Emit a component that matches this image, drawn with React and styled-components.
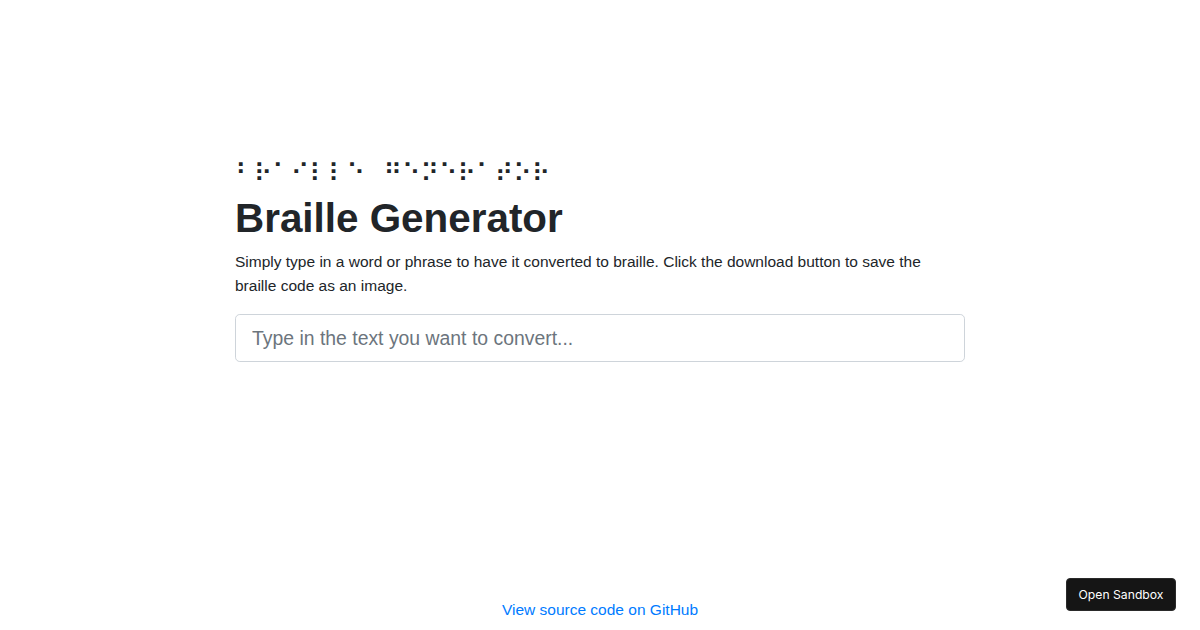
import React from "react";
import styled, { createGlobalStyle } from "styled-components";

const Global = createGlobalStyle`
  html, body { margin: 0; padding: 0; background: #fff; }
  body {
    font-family: "Liberation Sans", Helvetica, Arial, sans-serif;
    color: #212529;
    font-size: 16px;
    line-height: 1.5;
  }
  * { box-sizing: border-box; }
`;

const Page = styled.div`
  min-height: 630px;
  display: flex;
  flex-direction: column;
`;

const Main = styled.main`
  flex: 1;
  padding-top: 156px;
`;

const Container = styled.div`
  width: 730px;
  margin: 0 auto;
`;

const BrailleLine = styled.div`
  font-family: "DejaVu Sans", sans-serif;
  font-size: 25.3px;
  line-height: 36px;
  height: 38px;
  color: #212529;
  white-space: pre;
`;

const Title = styled.h1`
  margin: 0 0 8px;
  font-size: 40.4px;
  font-weight: 700;
  line-height: 48px;
`;

const Lead = styled.p`
  margin: 0 0 16px;
  font-size: 15.5px;
  line-height: 24px;
  width: 700px;
`;

const Input = styled.input`
  display: block;
  width: 100%;
  height: 48px;
  padding: 8px 16px;
  font-family: inherit;
  font-size: 19.4px;
  color: #495057;
  border: 1px solid #ced4da;
  border-radius: 4.8px;
  outline: none;
  &::placeholder { color: #6c757d; }
`;

const Footer = styled.footer`
  text-align: center;
  padding-bottom: 8px;
`;

const Link = styled.a`
  color: #007bff;
  text-decoration: none;
  font-size: 15.5px;
`;

const SandboxButton = styled.button`
  position: fixed;
  right: 24px;
  bottom: 19px;
  width: 110px;
  height: 33px;
  padding: 0;
  background: #151515;
  color: #fff;
  border: 1px solid #2a2a2a;
  border-radius: 4px;
  font-family: Inter, "Liberation Sans", sans-serif;
  font-size: 12.2px;
`;

export default function App() {
  return (
    <Page>
      <Global />
      <Main>
        <Container>
          <BrailleLine>⠃⠗⠁⠊⠇⠇⠑⠀⠛⠑⠝⠑⠗⠁⠞⠕⠗</BrailleLine>
          <Title>Braille Generator</Title>
          <Lead>
            Simply type in a word or phrase to have it converted to braille. Click the download button to save the braille code as an image.
          </Lead>
          <Input placeholder="Type in the text you want to convert..." />
        </Container>
      </Main>
      <Footer>
        <Link href="#">View source code on GitHub</Link>
      </Footer>
      <SandboxButton>Open Sandbox</SandboxButton>
    </Page>
  );
}
